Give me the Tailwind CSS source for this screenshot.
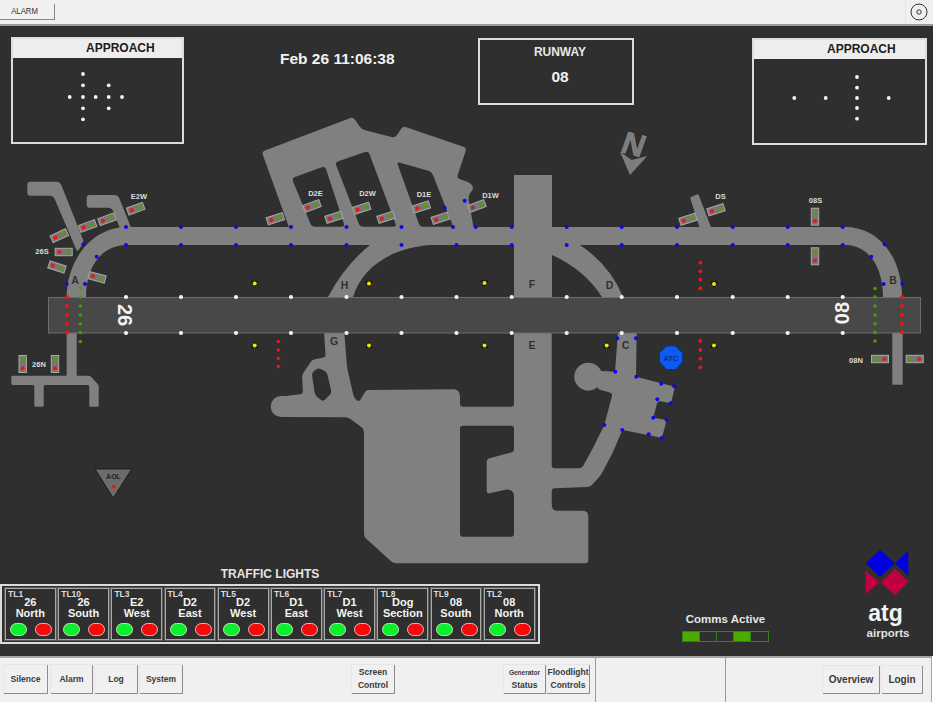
<!DOCTYPE html>
<html lang="en">
<head>
  <meta charset="UTF-8">
  <title>Airfield Ground Lighting</title>
  <script src="https://cdn.jsdelivr.net/npm/@tailwindcss/browser@4"></script>
</head>
<body class="bg-white font-['Liberation_Sans',Arial,sans-serif]">
<div class="w-[933px] h-[702px] flex flex-col overflow-hidden">

  <!-- top bar -->
  <header class="h-[26px] shrink-0 bg-[#f0f0f0] border-b-2 border-[#9a9a9a] flex items-start justify-between">
    <button class="mt-[4px] w-[55px] h-[16px] pr-[4px] text-[9px] leading-none text-[#333] border-r border-b border-[#888] bg-[#f0f0f0]"><span class="inline-block scale-x-[.86]">ALARM</span></button>
    <div class="w-[28px] h-[24px] pr-[2px] flex items-center justify-center border-l border-[#e4e4e4]">
      <svg width="18" height="18" viewBox="0 0 18 18"><circle cx="9" cy="9" r="8" fill="none" stroke="#333"/><circle cx="9" cy="9" r="2.2" fill="none" stroke="#333"/></svg>
    </div>
  </header>

  <!-- airfield map -->
  <main class="relative h-[630px] shrink-0 bg-[#2f2f2f] overflow-hidden">
    <svg id="map" class="absolute inset-0" width="933" height="630" viewBox="0 26 933 630" font-family="Liberation Sans, Arial, sans-serif" font-weight="bold">
      <g id="ground" fill="#808080"></g>
      <rect x="48.5" y="297.5" width="872" height="35.5" fill="#484848" stroke="#6c6c6c"/>
      <g id="lights"></g>
      <g id="signals"></g>

      <g font-size="7.5" fill="#dcdcdc" text-anchor="middle">
        <text x="139" y="199">E2W</text>
        <text x="42" y="254">26S</text>
        <text x="39" y="367">26N</text>
        <text x="315.5" y="196">D2E</text>
        <text x="367.5" y="196">D2W</text>
        <text x="424" y="197">D1E</text>
        <text x="490.5" y="197.5">D1W</text>
        <text x="720.5" y="199">DS</text>
        <text x="815.5" y="203">08S</text>
        <text x="856" y="363">08N</text>
      </g>
      <g font-size="10.5" fill="#303030" text-anchor="middle">
        <text x="75" y="284">A</text>
        <text x="893" y="284">B</text>
        <text x="344.5" y="289">H</text>
        <text x="334" y="345">G</text>
        <text x="532" y="288">F</text>
        <text x="532" y="349">E</text>
        <text x="609.5" y="289">D</text>
        <text x="625.5" y="349">C</text>
      </g>
      <text transform="translate(125 315) rotate(90)" font-size="20" fill="#f2f2f2" text-anchor="middle" dy="7">26</text>
      <text transform="translate(841.5 313) rotate(-90)" font-size="20" fill="#f2f2f2" text-anchor="middle" dy="7">08</text>

      <!-- north arrow -->
      <text transform="translate(634 144) rotate(14) skewX(-6)" font-size="31" fill="#7c7c7c" stroke="#9a9a9a" stroke-width=".5" text-anchor="middle" dy="11">N</text>
      <polygon points="620,151.7 631.7,160 647.3,156 630,175" fill="#7c7c7c"/>

      <!-- ATC -->
      <polygon points="666.5,346 675.5,346 682.5,353 682.5,362 675.5,369.5 666.5,369.5 659.5,362 659.5,353" fill="#0a5cf5" stroke="#0a2f90"/>
      <text x="671" y="360.5" font-size="7.5" fill="#0b2a88" text-anchor="middle">ATC</text>

      <!-- AOL -->
      <polygon points="95,469 131.7,469 113.3,498" fill="#6c6c6c" stroke="#1c1c1c" stroke-width="1"/>
      <text x="113.5" y="479" font-size="7" fill="#222" text-anchor="middle">AOL</text>
      <circle cx="113.7" cy="486.7" r="1.8" fill="#f01010"/>

      <!-- logo -->
      <polygon points="865.7,563.3 880,550 895,563.3 908.3,550.7 908.3,575.7 895,563.3 880,576.7" fill="#0000e0"/>
      <polygon points="865.7,570.7 880,583 895,569 908.3,581.7 895,595 880,581.7 865.7,594" fill="#c2003f"/>
      <text x="885.5" y="621" font-size="23" fill="#f4f4f4" text-anchor="middle">atg</text>
      <text x="888" y="636.5" font-size="11.5" fill="#e0e0e0" text-anchor="middle">airports</text>
    </svg>

    <!-- left approach -->
    <section class="absolute left-[11px] top-[11px] w-[173px] h-[107px] border-2 border-[#dcdcdc]">
      <h2 class="h-[19px] bg-[#ededed] text-[12px] font-bold leading-[19px] text-[#1c1c1c] pl-[73px]">APPROACH</h2>
    </section>
    <!-- right approach -->
    <section class="absolute left-[752px] top-[12px] w-[175px] h-[107px] border-2 border-[#dcdcdc]">
      <h2 class="h-[19px] bg-[#ededed] text-[12px] font-bold leading-[19px] text-[#1c1c1c] pl-[73px]">APPROACH</h2>
    </section>

    <div class="absolute left-[280px] top-[24px] text-[15.5px] leading-[18px] font-bold text-[#f2f2f2]">Feb 26 11:06:38</div>

    <section class="absolute left-[478px] top-[12px] w-[156px] h-[67px] pl-[8px] border-2 border-[#dcdcdc] text-center font-bold text-[#e8e8e8]">
      <div class="mt-[5px] text-[12px] leading-[14px]">RUNWAY</div>
      <div class="mt-[9px] text-[15.5px] leading-[18px] text-[#f2f2f2]">08</div>
    </section>

    <!-- traffic lights -->
    <section class="absolute left-0 top-[541px] w-[540px]">
      <h2 class="text-center text-[12px] leading-[14px] font-bold text-[#e4e4e4]">TRAFFIC LIGHTS</h2>
      <div id="tl" class="mt-[3px] h-[60px] border-2 border-[#dcdcdc] pl-[3px] pr-[3.5px] pt-[1.5px] grid grid-cols-10 gap-[2.5px] items-start"></div>
    </section>

    <!-- comms -->
    <section class="absolute left-[682px] top-[586px] w-[87px]">
      <div class="text-center text-[11.5px] leading-[14px] font-bold text-[#e4e4e4]">Comms Active</div>
      <div class="mt-[5px] h-[11px] grid grid-cols-5 border border-[#2a8a10] divide-x divide-[#2a8a10]">
        <span class="bg-[#4caa00]"></span><span></span><span></span><span class="bg-[#4caa00]"></span><span></span>
      </div>
    </section>
  </main>

  <!-- bottom bar -->
  <footer class="h-[46px] shrink-0 bg-[#f0f0f0] border-t-2 border-[#a4a4a4] border-r border-r-[#a4a4a4] w-[932px] flex text-[8.5px] font-bold text-[#3a3a3a] leading-[13px] text-center">
    <div class="w-[596px] shrink-0 border-r border-[#9a9a9a] pl-[4px] pt-[7px] flex items-start">
      <button class="w-[44px] h-[29px] bg-[#f0f0f0] border-r border-b border-[#8c8c8c] shadow-[-1px_-1px_0_#e6e6e6]">Silence</button>
      <button class="ml-[3px] w-[42px] h-[29px] bg-[#f0f0f0] border-r border-b border-[#8c8c8c] shadow-[-1px_-1px_0_#e6e6e6]">Alarm</button>
      <button class="ml-[2px] w-[43px] h-[29px] bg-[#f0f0f0] border-r border-b border-[#8c8c8c] shadow-[-1px_-1px_0_#e6e6e6]">Log</button>
      <button class="ml-[2px] w-[43px] h-[29px] bg-[#f0f0f0] border-r border-b border-[#8c8c8c] shadow-[-1px_-1px_0_#e6e6e6]">System</button>
      <button class="ml-[169px] w-[43px] h-[29px] bg-[#f0f0f0] border-r border-b border-[#8c8c8c] shadow-[-1px_-1px_0_#e6e6e6]">Screen<br>Control</button>
      <button class="ml-[109px] w-[42px] h-[29px] bg-[#f0f0f0] border-r border-b border-[#8c8c8c] shadow-[-1px_-1px_0_#e6e6e6]"><span class="text-[6.5px]">Generator</span><br>Status</button>
      <button class="ml-[1px] w-[43px] h-[29px] bg-[#f0f0f0] border-r border-b border-[#8c8c8c] shadow-[-1px_-1px_0_#e6e6e6]">Floodlight<br>Controls</button>
    </div>
    <div class="w-[130px] shrink-0 border-r border-[#9a9a9a]"></div>
    <div class="flex-1 pt-[8px] pl-[97px] flex items-start text-[10px]">
      <button class="w-[57px] h-[28px] bg-[#f0f0f0] border-r border-b border-[#8c8c8c] shadow-[-1px_-1px_0_#e6e6e6]">Overview</button>
      <button class="ml-[2px] w-[41px] h-[28px] bg-[#f0f0f0] border-r border-b border-[#8c8c8c] shadow-[-1px_-1px_0_#e6e6e6]">Login</button>
    </div>
  </footer>
</div>

<script>
const NS = 'http://www.w3.org/2000/svg';

function add(parent, tag, attrs) {
  const el = document.createElementNS(NS, tag);
  for (const k in attrs) el.setAttribute(k, attrs[k]);
  parent.appendChild(el);
  return el;
}

// closed ring with softened corners
function ring(pts, r) {
  let d = '';
  pts.forEach((p, i) => {
    const a = pts[(i + pts.length - 1) % pts.length], b = pts[(i + 1) % pts.length];
    const cut = (q) => {
      const len = Math.hypot(q[0] - p[0], q[1] - p[1]), t = Math.min(r, len / 2) / len;
      return [p[0] + (q[0] - p[0]) * t, p[1] + (q[1] - p[1]) * t];
    };
    const s = cut(a), e = cut(b);
    d += (i ? 'L' : 'M') + s[0] + ' ' + s[1] + 'Q' + p[0] + ' ' + p[1] + ' ' + e[0] + ' ' + e[1];
  });
  return d + 'Z';
}

const ground = document.getElementById('ground');
const shape = (rings, r = 2.5) => add(ground, 'path', { d: rings.map(x => ring(x, r)).join(''), 'fill-rule': 'evenodd' });

// main taxiway band with curved ends
add(ground, 'path', { d: 'M124 227L848 227C880 229 902 258 902 297L883 297C883 268 870 247 848 245L124 245C100 247 86 268 86 297L66.7 297C66.7 262 90 229 124 227Z' });
// runway crossing F, D curve, H curve
add(ground, 'rect', { x: 514, y: 175, width: 38, height: 125 });
add(ground, 'path', { d: 'M580 245Q610 265 623 297L602 297Q585 270 552 255L552 245Z' });
add(ground, 'path', { d: 'M370 245Q345 265 328 297L353 297C362 268 390 248 430 245Z' });

// spurs
shape([[[27.3, 181.7], [60, 181.7], [84, 242], [77.3, 252], [53.3, 195.7], [27.3, 195.7]]], 3);
shape([[[86.7, 195], [118, 195], [132, 230], [120.7, 230], [111.7, 207.7], [86.7, 207.7]]], 3);
shape([[[690, 197.3], [698.3, 194], [711.7, 229], [700, 229]]], 1);

// lower left stub
add(ground, 'rect', { x: 66.7, y: 330, width: 10, height: 50 });
shape([[[11.3, 375.7], [90, 375.7], [98.7, 385], [98.7, 406.7], [89.3, 406.7], [89.3, 385], [43.7, 385], [43.7, 406.7], [34.3, 406.7], [34.3, 385], [11.3, 385]]], 1.5);
// stub under B
add(ground, 'rect', { x: 892.3, y: 330, width: 10.4, height: 54.7 });

// dog section
shape([
  [[261.7, 151.7], [353, 117], [361.7, 129.3], [395, 138], [403, 126], [466.7, 148], [456.7, 178], [470, 182.7], [474, 188], [468, 196], [474, 230], [290, 230]],
  [[291.7, 178.3], [325, 166], [345, 226.7], [311.7, 226.7]],
  [[335, 162.3], [368.3, 151], [396.7, 226.7], [360, 226.7]],
  [[396.7, 161.7], [431.7, 171.7], [453.3, 226.7], [420, 226.7]]
], 3.5);

// apron, G and E taxiways, C stand
shape([
  [[324, 332], [325.7, 357], [312, 360], [302, 375], [303, 394], [285, 396], [285, 417], [348, 417.3], [364, 429], [364, 536.7], [393.3, 563.3], [588.3, 563.3], [588.3, 513.3], [585, 510.7], [554, 510.7], [551.7, 506.7], [551.7, 488.3], [590, 487], [601, 475], [613, 452], [622.3, 430], [662, 437.7], [666.7, 420], [653.3, 417.7], [657.7, 400.7], [671, 403.3], [675, 386.7], [636, 376.7], [636.7, 332], [618, 332], [615, 371.7], [598, 371], [597, 389], [612.7, 393.3], [604.3, 425], [592, 450], [581.7, 468.3], [551.7, 468.3], [551.7, 332], [514, 332], [514, 406.7], [460, 406.7], [460, 393], [456.7, 389.3], [366.7, 390], [365, 392], [359, 402], [354, 398], [347, 367], [344.3, 332]],
  [[460, 425.7], [514, 425.7], [514, 451.7], [486.7, 459], [486.7, 494], [508.3, 489], [514, 492.3], [514, 536.7], [460, 536.7]],
  [[311.7, 373], [318, 367.7], [326.7, 371.7], [331.7, 393], [323, 401.7], [315, 395]]
], 3);
add(ground, 'rect', { x: 270.7, y: 396, width: 30, height: 21, rx: 10.5 });
add(ground, 'circle', { cx: 588.3, cy: 376.7, r: 14 });

// lights
const lights = document.getElementById('lights');
const dots = (list, fill, r = 2) => list.forEach(p => add(lights, 'circle', { cx: p[0], cy: p[1], r, fill }));

const cols = [126, 181, 236, 291, 346.5, 401.5, 456.5, 511.7, 566.7, 621.7, 677, 732.7, 787.7, 842.7];
const blue = [];
cols.forEach(x => {
  if (x !== 456.5) blue.push([x, 227]);
  blue.push([x, 245]);
});
blue.push([453, 227], [475.7, 227], [444.7, 208], [464.7, 200.7], [83.3, 244.3], [96.7, 256.7], [66.7, 284], [85, 284],
  [884.7, 244.3], [871.3, 256.7], [883.7, 284], [902.3, 284],
  [617.3, 338.3], [636, 338.3], [615.3, 371.7], [636.3, 376.7], [661.3, 383.7], [674.3, 386.3], [657.3, 399.3],
  [670.7, 403.3], [653.3, 417.7], [666.7, 420], [662, 437.7], [648.7, 434.3], [622.3, 430], [604.3, 425]);
dots(blue, '#0a0ae6');
cols.forEach(x => dots([[x, 297], [x, 333]], '#f4f4f4', 2.1));

const rows = [297, 306, 315, 323.7, 332.5];
dots(rows.map(y => [67, y]), '#f01414');
dots(rows.map(y => [902, y]), '#f01414');
dots([288, ...rows, 341.5].map(y => [80.3, y]), '#4f9a00', 1.8);
dots([288.5, ...rows, 341].map(y => [875, y]), '#4f9a00', 1.8);
dots([341.5, 350, 358.5, 366.5].map(y => [278.3, y]), '#f01414', 1.8);
dots([262.7, 271.3, 279.7, 288.3, 341, 350, 358.7, 367.3].map(y => [700.3, y]), '#f01414', 1.9);

// approach lights
dots([[83, 74], [83, 85.3], [108.7, 85.3], [69.7, 97], [83, 97], [95.7, 97], [108.7, 97], [122, 97], [83, 108.3], [108.7, 108.3], [83, 119.3],
  [857, 77], [857, 87.7], [794.3, 98], [825.7, 98], [857, 98], [888.7, 98], [857, 108], [857, 118.7]], '#f4f4f4', 1.9);

// stop bar markers
const marker = (x, y, down) => {
  const pts = down ? [[x - 4, y - 3], [x + 4, y - 3], [x, y + 3.5]] : [[x - 4, y + 3], [x + 4, y + 3], [x, y - 3.5]];
  add(lights, 'polygon', { points: pts.join(' '), fill: '#141414' });
  add(lights, 'circle', { cx: x, cy: y + (down ? -0.5 : 0.5), r: 2, fill: '#f2e600' });
};
[[254.7, 284], [369, 284], [484.5, 283.5], [714, 284.5]].forEach(p => marker(p[0], p[1], true));
[[254.7, 345], [369, 345], [484.5, 345], [606.7, 345], [714, 345]].forEach(p => marker(p[0], p[1], false));

// signal heads: x, y, rotation
const signals = document.getElementById('signals');
[[59.3, 235.7, -25], [87.7, 226, -20], [107, 219.3, -20], [135.7, 208.7, -20], [63.7, 252, 0], [57, 267, 18], [97, 277.3, 15],
  [275.3, 218.7, -18], [312, 206, -20], [334, 217.3, -18], [361.7, 208.3, -18], [386, 217.3, -18], [421.3, 207, -18], [440.3, 218.3, -18], [477, 206, -20],
  [688, 219.3, -18], [716, 209.7, -18], [22.7, 364, -90], [55, 364, -90], [815, 216.7, -90], [815, 256.3, -90], [880, 359, 180], [914.7, 359, 180]
].forEach(s => {
  const g = add(signals, 'g', { transform: `translate(${s[0]} ${s[1]}) rotate(${s[2]})` });
  add(g, 'rect', { x: -8.5, y: -3.7, width: 17, height: 7.4, fill: '#777', stroke: '#a8a8a8' });
  add(g, 'circle', { cx: -4.3, cy: 0, r: 2, fill: s[0] === 477 ? '#8a3a3a' : '#f01414' });
  add(g, 'circle', { cx: 4.3, cy: 0, r: 2, fill: '#55a000' });
});

// traffic light cells
const tl = [['TL1', '26', 'North'], ['TL10', '26', 'South'], ['TL3', 'E2', 'West'], ['TL4', 'D2', 'East'], ['TL5', 'D2', 'West'],
  ['TL6', 'D1', 'East'], ['TL7', 'D1', 'West'], ['TL8', 'Dog', 'Section'], ['TL9', '08', 'South'], ['TL2', '08', 'North']];
document.getElementById('tl').innerHTML = tl.map(c => `
  <div class="h-[52.5px] border border-[#a8a8a8] outline-1 outline-[#5a5a5a] flex flex-col font-bold">
    <div class="h-[7px] pl-[2px] pt-[1px] text-[8.5px] leading-[9px] text-[#dcdcdc]">${c[0]}</div>
    <div class="text-center text-[11px] leading-[11px] text-[#f4f4f4] mt-[1.5px]">${c[1]}<br>${c[2]}</div>
    <div class="mt-[4px] pl-[4px] flex gap-[8px]">
      <span class="w-[17px] h-[13px] rounded-full bg-[#0cf02c] border border-[#b8e8b8]"></span>
      <span class="w-[17px] h-[13px] rounded-full bg-[#f80808] border border-[#e8b8b8]"></span>
    </div>
  </div>`).join('');
</script>
</body>
</html>
